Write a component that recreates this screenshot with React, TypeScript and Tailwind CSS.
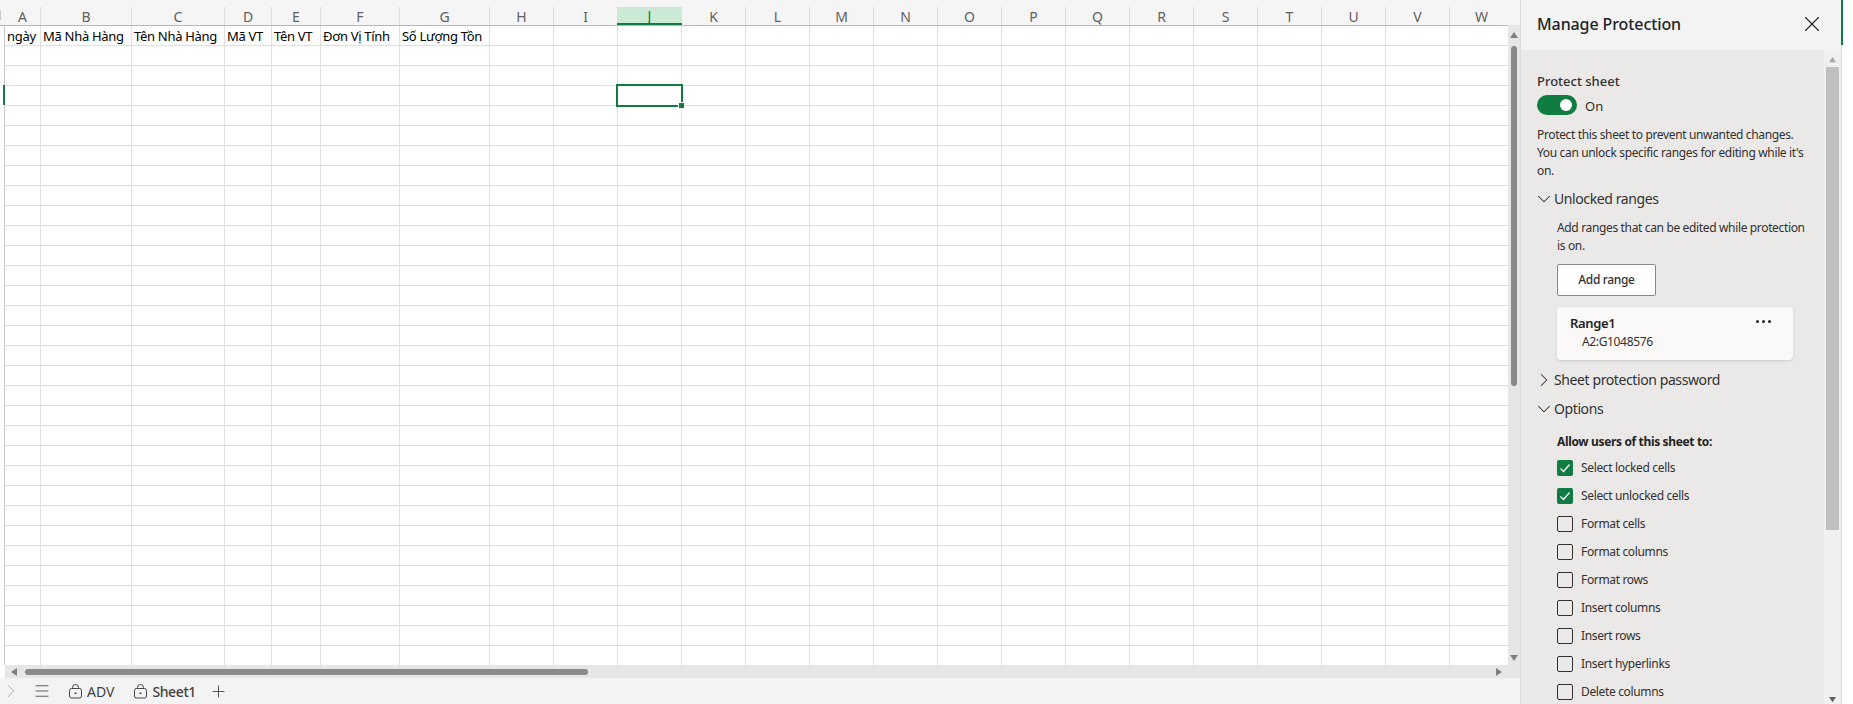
import { ChevronDown, ChevronRight, Menu, Plus, X } from "lucide-react";

const columns = [
  { name: "A", width: 36, text: "ngày" },
  { name: "B", width: 91, text: "Mã Nhà Hàng" },
  { name: "C", width: 93, text: "Tên Nhà Hàng" },
  { name: "D", width: 47, text: "Mã VT" },
  { name: "E", width: 49, text: "Tên VT" },
  { name: "F", width: 79, text: "Đơn Vị Tính" },
  { name: "G", width: 90, text: "Số Lượng Tồn" },
  { name: "H", width: 64 },
  { name: "I", width: 64 },
  { name: "J", width: 64 },
  { name: "K", width: 64 },
  { name: "L", width: 64 },
  { name: "M", width: 64 },
  { name: "N", width: 64 },
  { name: "O", width: 64 },
  { name: "P", width: 64 },
  { name: "Q", width: 64 },
  { name: "R", width: 64 },
  { name: "S", width: 64 },
  { name: "T", width: 64 },
  { name: "U", width: 64 },
  { name: "V", width: 64 },
  { name: "W", width: 64 },
];

const gridTemplate = columns.map((c) => `${c.width}px`).join(" ");
const rows = Array.from({ length: 32 }, (_, i) => i);

const options = [
  { label: "Select locked cells", checked: true },
  { label: "Select unlocked cells", checked: true },
  { label: "Format cells" },
  { label: "Format columns" },
  { label: "Format rows" },
  { label: "Insert columns" },
  { label: "Insert rows" },
  { label: "Insert hyperlinks" },
  { label: "Delete columns" },
];

function LockIcon() {
  return (
    <svg width="14" height="15" viewBox="0 0 14 15" fill="none" stroke="#424242" strokeWidth="1">
      <rect x="0.5" y="4.5" width="12" height="9.5" rx="2" />
      <path d="M3.5 4.5V3.5a3 3 0 0 1 6 0v1" />
      <circle cx="6.5" cy="9.2" r="1" fill="#424242" stroke="none" />
    </svg>
  );
}

function Triangle({ points, className }: { points: string; className: string }) {
  return (
    <svg viewBox="0 0 8 8" className={className}>
      <polygon points={points} fill="currentColor" />
    </svg>
  );
}

function SheetGrid() {
  return (
    <div className="flex h-full w-[1508px] flex-col overflow-hidden bg-white">
      <div className="flex h-[26px] shrink-0 border-b border-[#b8b8b8] bg-[#f5f5f5] pt-[7px]">
        <div className="relative w-[5px] shrink-0">
          <div className="absolute left-0 top-[3px] h-[10px] w-[1px] bg-[#c8c8c8]" />
        </div>
        <div className="grid" style={{ gridTemplateColumns: gridTemplate }}>
          {columns.map((c) =>
            c.name === "J" ? (
              <div
                key={c.name}
                className="-ml-px flex h-[18px] items-center justify-center border-b-2 border-[#107c41] bg-[#caead6] text-[14px] text-[#107c41]"
              >
                {c.name}
              </div>
            ) : (
              <div
                key={c.name}
                className="flex h-[18px] items-center justify-center border-r border-[#dcdcdc] text-[14px] text-[#616161]"
              >
                {c.name}
              </div>
            ),
          )}
        </div>
      </div>
      <div className="relative flex flex-1">
        <div className="relative w-[5px] shrink-0 border-r border-[#c8c8c8]">
          <div className="absolute left-[3px] top-[59px] h-[20px] w-[2px] bg-[#107c41]" />
        </div>
        <div className="grid content-start" style={{ gridTemplateColumns: gridTemplate }}>
          {rows.map((r) =>
            columns.map((c) => (
              <div
                key={c.name + r}
                className="relative h-[20px] border-b border-r border-[#dfdfdf] px-[2px] text-[13px] leading-[21px] tracking-[-0.3px] whitespace-nowrap text-black"
              >
                {r === 0 ? c.text : null}
                {r === 3 && c.name === "J" ? (
                  <div className="absolute -left-[2px] -top-[2px] z-10 h-[23px] w-[67px] border-2 border-[#107c41]">
                    <div className="absolute -bottom-[3px] -right-[3px] h-[6px] w-[6px] border-l border-t border-white bg-[#107c41]" />
                  </div>
                ) : null}
              </div>
            )),
          )}
        </div>
      </div>
    </div>
  );
}

function VerticalScroll() {
  return (
    <div className="flex h-full w-[12px] flex-col bg-[#f5f5f5]">
      <div className="mt-[25px] flex flex-1 flex-col items-center bg-[#e6e6e6] px-[3px]">
        <Triangle points="4,1 8,7 0,7" className="mt-[6px] h-[8px] w-[8px] shrink-0 text-[#7f7f7f]" />
        <div className="mt-[7px] h-[340px] w-[6px] rounded-[3px] bg-[#8a8a8a]" />
        <div className="flex-1" />
        <Triangle points="0,1 8,1 4,7" className="mb-[3px] h-[8px] w-[8px] shrink-0 text-[#7f7f7f]" />
      </div>
    </div>
  );
}

function BottomBars() {
  return (
    <>
      <div className="ml-[5px] flex h-[13px] shrink-0 items-center bg-[#e6e6e6] pl-[5px] pr-[17px]">
        <Triangle points="1,4 7,0 7,8" className="h-[8px] w-[8px] shrink-0 text-[#7f7f7f]" />
        <div className="ml-[7px] h-[6px] w-[563px] rounded-[3px] bg-[#8a8a8a]" />
        <div className="flex-1" />
        <Triangle points="1,0 7,4 1,8" className="h-[8px] w-[8px] shrink-0 text-[#7f7f7f]" />
      </div>
      <div className="flex h-[26px] shrink-0 items-center bg-[#f3f3f3] text-[14px] text-[#424242]">
        <ChevronRight size={22} strokeWidth={1} className="text-[#a6a6a6]" />
        <Menu size={18} strokeWidth={1.1} className="ml-[11px]" />
        <div className="ml-[18px] flex items-center gap-[4px]">
          <LockIcon />
          <span>ADV</span>
        </div>
        <div className="ml-[20px] flex items-center gap-[4px]">
          <LockIcon />
          <span className="font-medium tracking-[-0.4px]">Sheet1</span>
        </div>
        <Plus size={19} strokeWidth={1.1} className="ml-[13px]" />
      </div>
    </>
  );
}

function Disclosure({ open, label }: { open?: boolean; label: string }) {
  return (
    <div className="flex h-[20px] items-center text-[14px] leading-[19px] tracking-[-0.4px] text-[#323130]">
      {open ? (
        <ChevronDown size={22} strokeWidth={1.1} className="-ml-[4px] -mr-[1px] shrink-0" />
      ) : (
        <ChevronRight size={22} strokeWidth={1.1} className="-ml-[4px] -mr-[1px] shrink-0" />
      )}
      <span className="-mt-[1px]">{label}</span>
    </div>
  );
}

function ProtectionPanel() {
  return (
    <div className="flex h-full w-[322px] shrink-0 flex-col border-x border-[#dcdcdc] bg-[#f3f3f3]">
      <div className="flex h-[50px] shrink-0 items-center justify-between pb-[2px] pl-[16px] pr-[16px]">
        <span className="text-[16px] font-medium tracking-[-0.1px] text-[#242424]">Manage Protection</span>
        <X size={26} strokeWidth={1} className="text-[#242424]" />
      </div>
      <div className="flex min-h-0 flex-1">
        <div className="w-[303px] overflow-hidden bg-[#ebe9e7] pl-[16px] pt-[21px] text-[12px] tracking-[-0.35px] text-[#323130]">
          <div className="text-[13px] font-medium leading-[20px] tracking-normal">Protect sheet</div>
          <div className="mt-[4px] flex h-[20px] items-center gap-[8px]">
            <div className="flex h-[20px] w-[40px] items-center justify-end rounded-full bg-[#107c41] pr-[5px]">
              <div className="h-[12px] w-[12px] rounded-full bg-white" />
            </div>
            <span className="mt-[1px] text-[13px] leading-[18px] tracking-normal">On</span>
          </div>
          <p className="mt-[11px] w-[275px] leading-[18px]">
            Protect this sheet to prevent unwanted changes. You can unlock specific ranges for editing while it's on.
          </p>
          <div className="mt-[9px]">
            <Disclosure open label="Unlocked ranges" />
          </div>
          <div className="pl-[20px]">
            <p className="mt-[10px] w-[255px] leading-[18px]">Add ranges that can be edited while protection is on.</p>
            <button className="mt-[9px] h-[32px] w-[99px] rounded-[2px] border border-[#8a8886] bg-white font-medium text-[#323130]">
              Add range
            </button>
            <div className="relative mt-[11px] h-[53px] w-[236px] rounded-[4px] bg-[#faf9f8] shadow-sm">
              <div className="absolute left-[13px] top-[7px] text-[13px] font-semibold leading-[18px] text-[#242424]">Range1</div>
              <div className="absolute left-[25px] top-[26px] leading-[18px]">A2:G1048576</div>
              <div className="absolute right-[22px] top-[13px] flex gap-[3px]">
                <div className="h-[3px] w-[3px] rounded-full bg-[#242424]" />
                <div className="h-[3px] w-[3px] rounded-full bg-[#242424]" />
                <div className="h-[3px] w-[3px] rounded-full bg-[#242424]" />
              </div>
            </div>
          </div>
          <div className="mt-[10px]">
            <Disclosure label="Sheet protection password" />
          </div>
          <div className="mt-[9px]">
            <Disclosure open label="Options" />
          </div>
          <div className="pl-[20px]">
            <div className="mt-[14px] font-bold leading-[18px] text-[#242424]">Allow users of this sheet to:</div>
            <div className="mt-[3px]">
              {options.map((o) => (
                <div key={o.label} className="flex h-[28px] items-center gap-[8px]">
                  {o.checked ? (
                    <div className="flex h-[16px] w-[16px] items-center justify-center rounded-[2px] bg-[#107c41]">
                      <svg width="12" height="12" viewBox="0 0 12 12" fill="none" stroke="white" strokeWidth="1.2">
                        <path d="M1.5 6.5 4.5 9.5 10.5 2.5" />
                      </svg>
                    </div>
                  ) : (
                    <div className="h-[16px] w-[16px] rounded-[2px] border border-[#323130]" />
                  )}
                  <span>{o.label}</span>
                </div>
              ))}
            </div>
          </div>
        </div>
        <div className="flex w-[17px] shrink-0 flex-col items-center bg-[#f0f0f0]">
          <Triangle points="4,1 8,7 0,7" className="mt-[6px] h-[7px] w-[7px] shrink-0 text-[#a6a6a6]" />
          <div className="mt-[4px] h-[463px] w-[13px] shrink-0 bg-[#bfbfbf]" />
          <div className="flex-1" />
          <Triangle points="0,1 8,1 4,7" className="mb-[1px] h-[7px] w-[7px] shrink-0 text-[#606060]" />
        </div>
      </div>
    </div>
  );
}

export default function App() {
  return (
    <div
      className="relative flex h-screen w-full overflow-hidden bg-white"
      style={{ fontFamily: '"Noto Sans", "Open Sans", sans-serif' }}
    >
      <div className="flex h-full w-[1520px] shrink-0 flex-col">
        <div className="flex min-h-0 flex-1">
          <SheetGrid />
          <VerticalScroll />
        </div>
        <BottomBars />
      </div>
      <ProtectionPanel />
      <div className="absolute left-[1841px] top-0 h-[45px] w-[2px] bg-[#107c41]" />
    </div>
  );
}
